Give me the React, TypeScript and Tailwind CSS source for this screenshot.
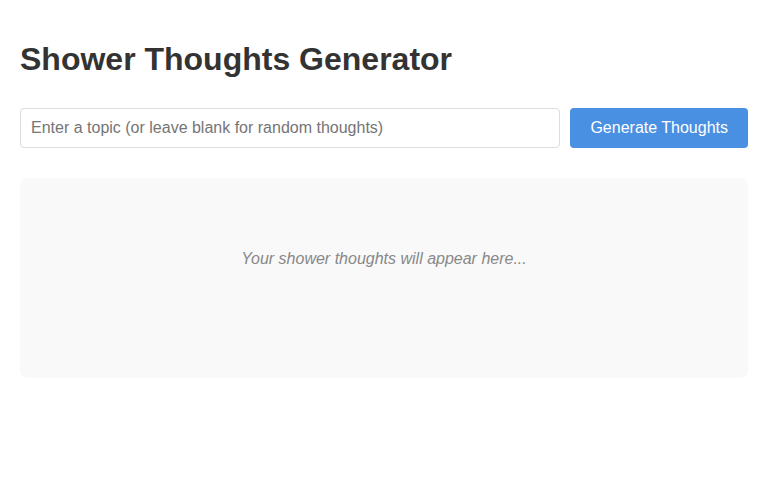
export default function App() {
  return (
    <div className="min-h-screen bg-white p-5 font-['Liberation_Sans',Arial,sans-serif] text-[#333]">
      <h1 className="mt-[21px] mb-[30px] text-[32px] leading-[37px] font-bold">Shower Thoughts Generator</h1>

      <div className="flex gap-[10px] mb-[30px]">
        <input
          type="text"
          placeholder="Enter a topic (or leave blank for random thoughts)"
          className="flex-1 h-10 px-[10px] text-base border border-[#ddd] rounded-[4px] outline-none placeholder:text-[#757575]"
        />
        <button className="h-10 px-5 bg-[#4a90e2] text-white text-base rounded-[4px]">
          Generate Thoughts
        </button>
      </div>

      <div className="h-[200px] bg-[#f9f9f9] rounded-lg pt-[72px] text-center">
        <p className="italic text-[#888] text-base leading-[18px]">Your shower thoughts will appear here...</p>
      </div>
    </div>
  );
}
